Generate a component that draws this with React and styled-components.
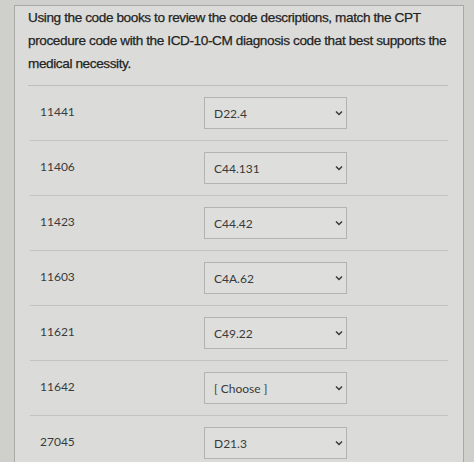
import React from "react";
import styled, { createGlobalStyle } from "styled-components";

const GlobalStyle = createGlobalStyle`
  html, body {
    margin: 0;
    padding: 0;
    background: #cfd0cc;
    overflow: hidden;
  }
`;

const Page = styled.div`
  width: 474px;
  height: 462px;
  padding: 5px 10px 0 14px;
  box-sizing: border-box;
  overflow: hidden;
`;

const Card = styled.div`
  background: #dbdcd9;
  border: 1px solid #a9aaa6;
  border-bottom: none;
  height: 100%;
  box-sizing: border-box;
  padding: 0 15px;
`;

const Question = styled.p`
  margin: 0 0 0 -2px;
  padding: 0 0 10px 0;
  font-family: "Liberation Sans", Arial, sans-serif;
  font-size: 13.6px;
  line-height: 23px;
  letter-spacing: -0.4px;
  white-space: nowrap;
  color: #242424;
  border-bottom: 1px solid #bdbebb;
  -webkit-text-stroke: 0.25px #242424;
`;

const Row = styled.div`
  display: grid;
  grid-template-columns: 174px 143px;
  align-items: center;
  padding: 11px 0;
  border-bottom: 1px solid #c3c4c1;
`;

const Code = styled.span`
  padding-left: 10px;
  padding-bottom: 3px;
  font-family: Lato, "Liberation Sans", sans-serif;
  font-size: 12px;
  color: #3a3a3a;
`;

const Select = styled.div`
  height: 32px;
  box-sizing: border-box;
  border: 1px solid #b3b4b1;
  background: #dedfdc;
  display: flex;
  align-items: center;
  justify-content: space-between;
  padding: 0 3px 0 9px;
  font-family: Lato, "Liberation Sans", sans-serif;
  font-size: 12px;
  color: #3a3a3a;
`;

const Chevron = () => (
  <svg width="8" height="6" viewBox="0 0 8 6">
    <path d="M1 1.5 L4 4.5 L7 1.5" fill="none" stroke="#3a3a3a" strokeWidth="1.5" />
  </svg>
);

const rows = [
  ["11441", "D22.4"],
  ["11406", "C44.131"],
  ["11423", "C44.42"],
  ["11603", "C4A.62"],
  ["11621", "C49.22"],
  ["11642", "[ Choose ]"],
  ["27045", "D21.3"],
];

export default function App() {
  return (
    <Page>
      <GlobalStyle />
      <Card>
        <Question>
          Using the code books to review the code descriptions, match the CPT
          <br />
          procedure code with the ICD-10-CM diagnosis code that best supports the
          <br />
          medical necessity.
        </Question>
        {rows.map(([code, value]) => (
          <Row key={code}>
            <Code>{code}</Code>
            <Select>
              <span>{value}</span>
              <Chevron />
            </Select>
          </Row>
        ))}
      </Card>
    </Page>
  );
}
